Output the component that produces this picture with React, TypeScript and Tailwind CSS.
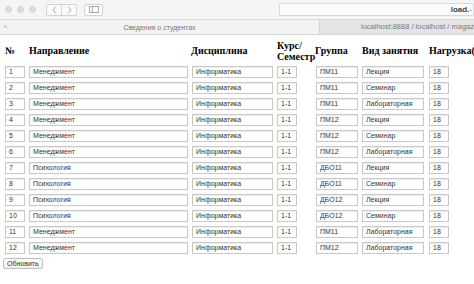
import React from "react";

const rows: [string, string, string, string, string, string, string][] = [
  ["1", "Менеджмент", "Информатика", "1-1", "ПМ11", "Лекция", "18"],
  ["2", "Менеджмент", "Информатика", "1-1", "ПМ11", "Семинар", "18"],
  ["3", "Менеджмент", "Информатика", "1-1", "ПМ11", "Лабораторная", "18"],
  ["4", "Менеджмент", "Информатика", "1-1", "ПМ12", "Лекция", "18"],
  ["5", "Менеджмент", "Информатика", "1-1", "ПМ12", "Семинар", "18"],
  ["6", "Менеджмент", "Информатика", "1-1", "ПМ12", "Лабораторная", "18"],
  ["7", "Психология", "Информатика", "1-1", "ДБО11", "Лекция", "18"],
  ["8", "Психология", "Информатика", "1-1", "ДБО11", "Семинар", "18"],
  ["9", "Психология", "Информатика", "1-1", "ДБО12", "Лекция", "18"],
  ["10", "Психология", "Информатика", "1-1", "ДБО12", "Семинар", "18"],
  ["11", "Менеджмент", "Информатика", "1-1", "ПМ11", "Лабораторная", "18"],
  ["12", "Менеджмент", "Информатика", "1-1", "ПМ12", "Лабораторная", "18"],
];

const widths = ["w-[20px]", "w-[159px]", "w-[81px]", "w-[20px]", "w-[42px]", "w-[62px]", "w-[20px]"];

function Field({ value, w }: { value: string; w: string }) {
  return (
    <div
      className={`${w} h-[12px] border border-[#c9c9c9] bg-white shadow-[inset_0_1px_1px_rgba(0,0,0,0.08)] pl-[3px] text-[7px] leading-[10px] text-[#333] whitespace-nowrap overflow-hidden`}
    >
      {value}
    </div>
  );
}

export default function App() {
  const grid =
    "grid grid-cols-[24px_163px_85px_38px_47px_67px_47px] pl-[3px]";
  return (
    <div
      className="w-[474px] h-[284px] overflow-hidden bg-white"
      style={{ fontFamily: '"Liberation Sans", Arial, sans-serif' }}
    >
      {/* toolbar */}
      <div className="h-[20px] bg-[#f5f5f5] border-b border-[#d9d9d9] flex items-center">
        <div className="flex items-center gap-[5px] pl-[5px]">
          <div className="w-[7px] h-[7px] rounded-full bg-[#dcdcdc] border border-[#d3d3d3]" />
          <div className="w-[7px] h-[7px] rounded-full bg-[#dcdcdc] border border-[#d3d3d3]" />
          <div className="w-[7px] h-[7px] rounded-full bg-[#dcdcdc] border border-[#d3d3d3]" />
        </div>
        <div className="ml-[10px] flex h-[12px] border border-[#d2d2d2] rounded-[2px] bg-[#fbfbfb]">
          <div className="w-[15px] flex items-center justify-center border-r border-[#d2d2d2]">
            <svg width="5" height="8" viewBox="0 0 5 8">
              <path d="M4 0.5 L1 4 L4 7.5" stroke="#a8a8a8" strokeWidth="1" fill="none" />
            </svg>
          </div>
          <div className="w-[14px] flex items-center justify-center">
            <svg width="5" height="8" viewBox="0 0 5 8">
              <path d="M1 0.5 L4 4 L1 7.5" stroke="#a8a8a8" strokeWidth="1" fill="none" />
            </svg>
          </div>
        </div>
        <div className="ml-[7px] w-[19px] h-[12px] border border-[#d2d2d2] rounded-[2px] bg-[#fbfbfb] flex items-center justify-center">
          <svg width="10" height="7" viewBox="0 0 10 7">
            <rect x="0.5" y="0.5" width="9" height="6" stroke="#aaa" fill="none" />
            <line x1="3.5" y1="0.5" x2="3.5" y2="6.5" stroke="#aaa" />
          </svg>
        </div>
        <div className="ml-auto w-[195px] h-[13px] border border-[#dadada] rounded-[2px] bg-[#fcfcfc] flex items-center justify-end pr-[1px]">
          <span className="text-[8px] font-bold text-[#444] leading-none whitespace-nowrap">
            load.<span className="text-[#7aa7d8]">-</span>
          </span>
        </div>
      </div>
      {/* tab bar */}
      <div className="h-[15px] bg-[#f3f3f3] border-b border-[#d6d6d6] flex">
        <div className="flex-1 relative flex items-center justify-center">
          <span className="absolute left-[3px] text-[8px] leading-none text-[#b3b3b3]">×</span>
          <span className="text-[7px] text-[#777] leading-none">Сведения о студентах</span>
        </div>
        <div className="w-[155px] bg-[#e4e4e4] border-l border-[#d3d3d3] flex items-center pl-[41px] overflow-hidden">
          <span className="text-[7.5px] text-[#7a7a7a] leading-none whitespace-nowrap">
            localhost:8888 / localhost / magazine
          </span>
        </div>
      </div>
      {/* table */}
      <div className="pt-[2px]">
        <div
          className={`${grid} h-[27px] items-center text-[10px] font-bold text-black leading-[11px] whitespace-nowrap`}
          style={{ fontFamily: '"Liberation Serif", "Times New Roman", serif' }}
        >
          <div className="pl-[2px]">№</div>
          <div className="pl-[2px]">Направление</div>
          <div className="pl-[1px]">Дисциплина</div>
          <div className="pl-[2px]">
            Курс/
            <br />
            Семестр
          </div>
          <div className="pl-[2px]">Группа</div>
          <div className="pl-[2px]">Вид занятия</div>
          <div className="pl-[2px]">Нагрузка(ч)</div>
        </div>
        {rows.map((r) => (
          <div key={r[0]} className={`${grid} h-[16px] items-center`}>
            {r.map((v, i) => (
              <div key={i} className={i === 4 ? "pl-[3px]" : "pl-[2px]"}>
                <Field value={v} w={widths[i]} />
              </div>
            ))}
          </div>
        ))}
        <div className="flex pl-[3px] pt-[2px]">
          <div className="flex items-center h-[11px] px-[3px] border border-[#bdbdbd] rounded-[2px] bg-gradient-to-b from-white to-[#f0f0f0] text-[7px] leading-none text-[#333]">
            Обновить
          </div>
        </div>
      </div>
    </div>
  );
}
